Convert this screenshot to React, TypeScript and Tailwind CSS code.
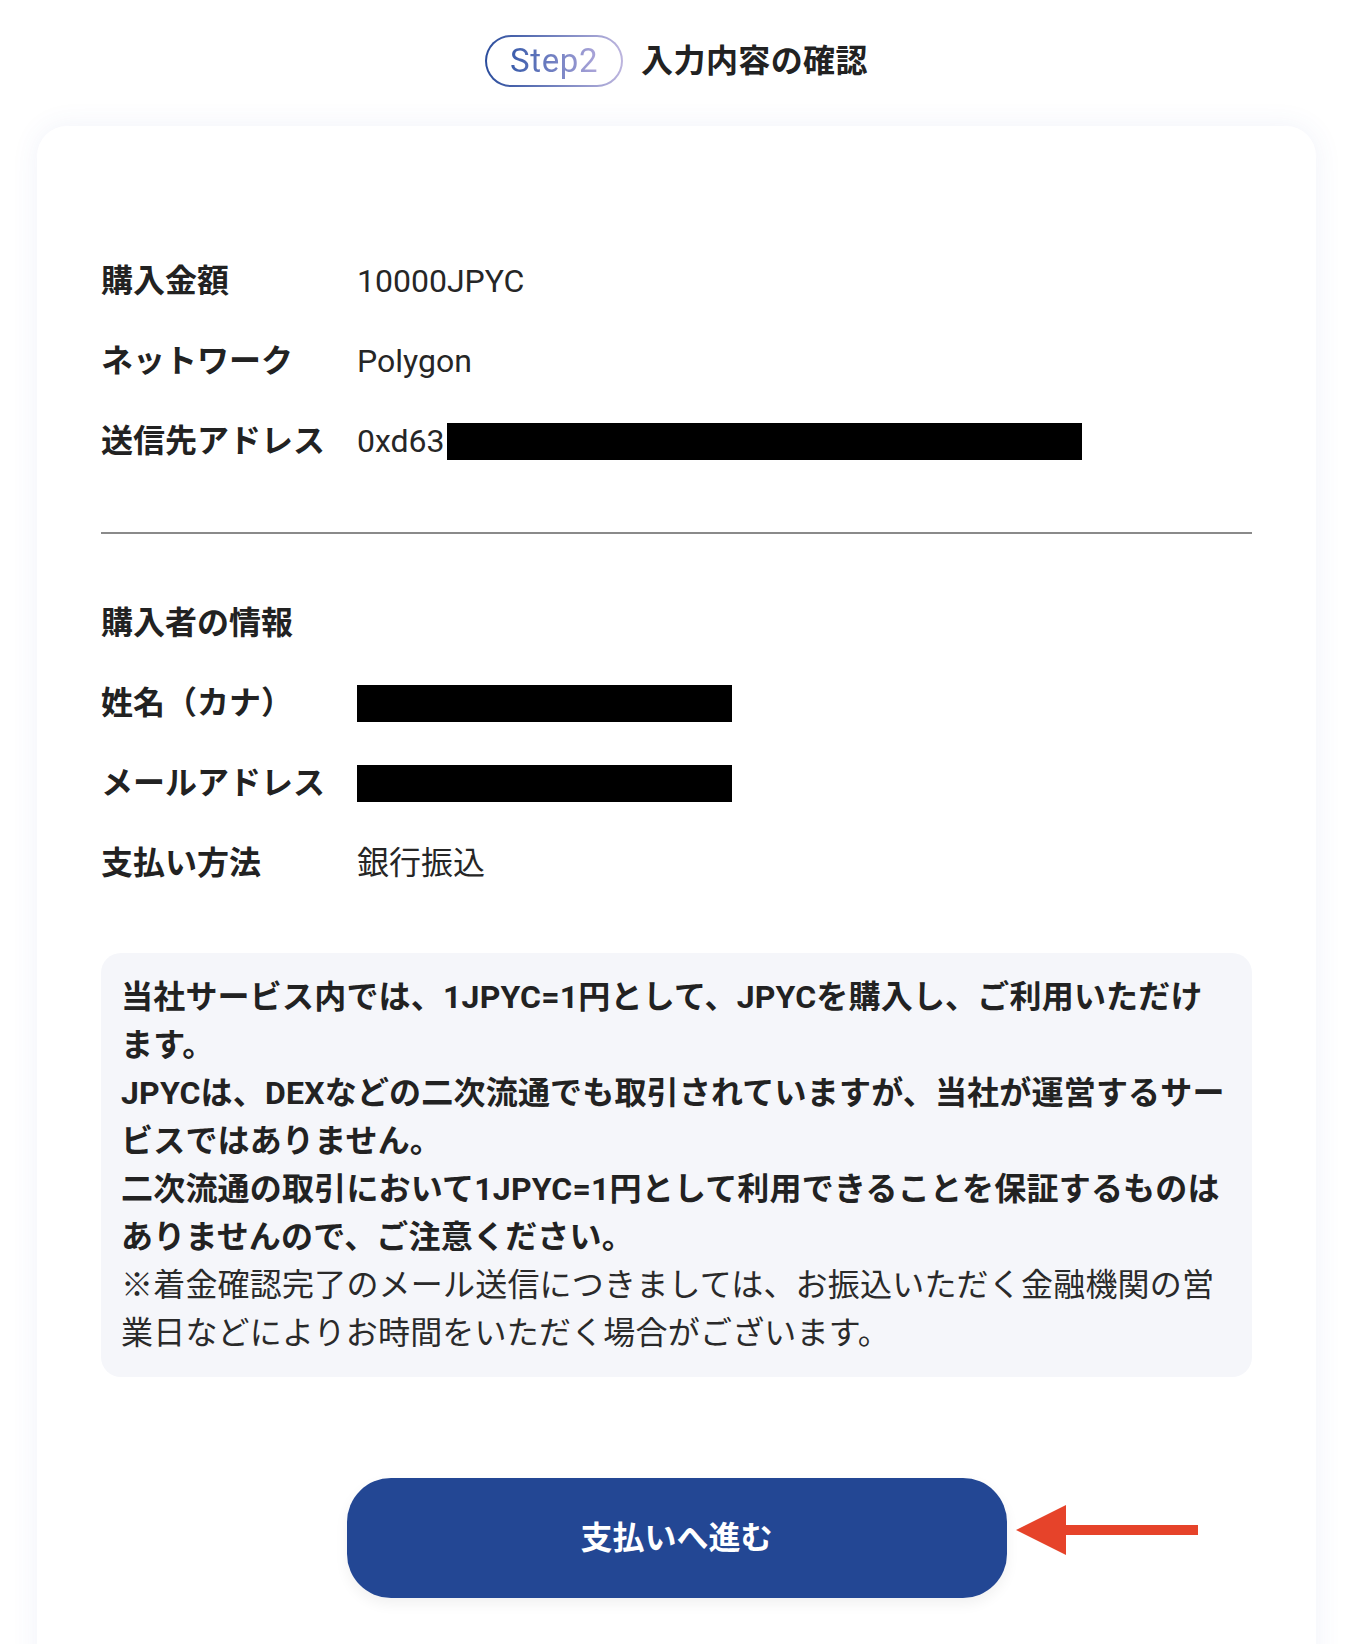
import React from "react";

const FONT = "font-['Roboto','Noto_Sans_CJK_JP',sans-serif]";

const Row = ({ label, children }: { label: string; children: React.ReactNode }) => (
  <div className="flex items-center h-12">
    <div className="w-[256px] shrink-0 font-bold text-[#222]">{label}</div>
    <div className="flex items-center text-[#262626]">{children}</div>
  </div>
);

const Redacted = ({ w }: { w: string }) => <div className={`${w} h-[37px] bg-black`} />;

const notice = {
  bold: [
    "当社サービス内では、1JPYC=1円として、JPYCを購入し、ご利用いただけ",
    "ます。",
    "JPYCは、DEXなどの二次流通でも取引されていますが、当社が運営するサー",
    "ビスではありません。",
    "二次流通の取引において1JPYC=1円として利用できることを保証するものは",
    "ありませんので、ご注意ください。",
  ],
  normal: [
    "※着金確認完了のメール送信につきましては、お振込いただく金融機関の営",
    "業日などによりお時間をいただく場合がございます。",
  ],
};

export default function App() {
  return (
    <div className={`h-screen overflow-hidden bg-white ${FONT} text-[32px] leading-[48px]`}>
      {/* step header */}
      <div className="pt-[35px] flex items-center justify-center gap-[18px]">
        <div className="rounded-full p-[2px] bg-linear-to-r from-[#2a4c9c] to-[#bdb5de]">
          <div className="h-[48px] rounded-full bg-white px-[23px] flex items-center">
            <span className="text-[33px] bg-linear-to-r from-[#3a5cab] to-[#aca5d9] bg-clip-text text-transparent tracking-[0.6px]">
              Step2
            </span>
          </div>
        </div>
        <h1 className="font-bold text-[#222] tracking-[0.4px]">入力内容の確認</h1>
      </div>

      {/* card */}
      <div className="mt-[39px] mx-[37px] rounded-[30px] bg-white shadow-[0_0_28px_rgba(60,90,180,0.08)] px-16 pt-[131px] pb-[120px]">
        <div className="flex flex-col gap-8">
          <Row label="購入金額">10000JPYC</Row>
          <Row label="ネットワーク">Polygon</Row>
          <Row label="送信先アドレス">
            <span>0xd63</span>
            <div className="ml-[2px]">
              <Redacted w="w-[635px]" />
            </div>
          </Row>
        </div>

        <div className="mt-[67px] h-[2px] bg-[#8a8a8a]" />

        <div className="mt-[65px] flex flex-col gap-8">
          <div className="h-12 font-bold text-[#222]">購入者の情報</div>
          <Row label="姓名（カナ）">
            <Redacted w="w-[375px]" />
          </Row>
          <Row label="メールアドレス">
            <Redacted w="w-[375px]" />
          </Row>
          <Row label="支払い方法">銀行振込</Row>
        </div>

        {/* notice */}
        <div className="mt-[66px] rounded-[20px] bg-[#f5f6fa] px-[20px] py-5 text-[#222]">
          {notice.bold.map((t) => (
            <div key={t} className="font-bold whitespace-nowrap tracking-[0.2px]">
              {t}
            </div>
          ))}
          {notice.normal.map((t) => (
            <div key={t} className="whitespace-nowrap text-[#2a2a2a] tracking-[0.2px]">
              {t}
            </div>
          ))}
        </div>

        {/* submit */}
        <div className="mt-[101px] flex justify-center">
          <div className="relative">
            <button className="w-[660px] h-[120px] rounded-[44px] bg-[#234794] text-white font-bold shadow-[0_6px_14px_rgba(0,0,0,0.06)]">
              支払いへ進む
            </button>
            <svg
              className="absolute left-[calc(100%+9px)] top-[27px]"
              width="182"
              height="50"
              viewBox="0 0 182 50"
            >
              <polygon points="0,25 50,0 50,50" fill="#e6432a" />
              <rect x="48" y="20" width="134" height="10" fill="#e6432a" />
            </svg>
          </div>
        </div>
      </div>
    </div>
  );
}
